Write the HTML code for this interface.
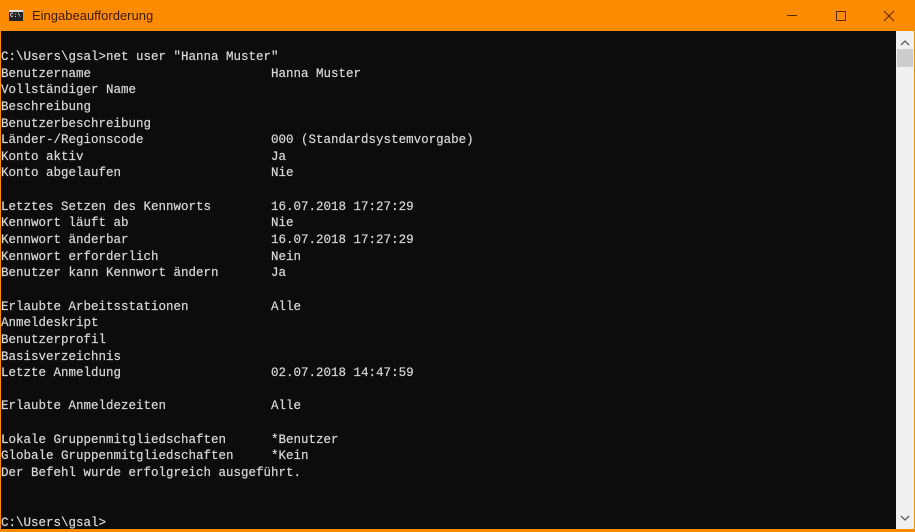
<!DOCTYPE html>
<html><head><meta charset="utf-8"><style>
html,body{margin:0;padding:0;width:915px;height:530px;overflow:hidden;background:#ff8c00;}
#title{position:absolute;left:0;top:0;width:915px;height:31px;background:#ff8c00;}
#title .t{position:absolute;left:32px;top:8px;font:13px "Liberation Sans",sans-serif;color:#3a1a00;}
#ico{position:absolute;left:9px;top:10px;width:14px;height:11px;background:#222;border-top:2px solid #ddd;box-sizing:border-box;}
#ico span{position:absolute;left:1px;top:0px;font:bold 6px "Liberation Mono",monospace;color:#ddd;}
#con{position:absolute;left:1px;top:31px;width:895px;height:498px;background:#0c0c0c;}
pre{position:absolute;left:1px;top:49px;margin:0;font:12.5px/16.64px "Liberation Mono",monospace;color:#d8d8d8;-webkit-text-stroke:0.2px #d8d8d8;}
#sb{position:absolute;left:896px;top:31px;width:18px;height:498px;background:#f0f0f0;}
#thumb{position:absolute;left:897px;top:49px;width:16px;height:18px;background:#cdcdcd;}
.ctl{position:absolute;top:0;height:31px;}
</style></head><body>
<div id="title">
<div id="ico"><span>C:\</span></div>
<div class="t">Eingabeaufforderung</div>
<svg class="ctl" style="left:780px" width="135" height="31">
<line x1="7" y1="15.5" x2="17" y2="15.5" stroke="#5a2a00" stroke-width="1"/>
<rect x="56.5" y="11.5" width="9" height="9" fill="none" stroke="#5a2a00" stroke-width="1"/>
<line x1="104" y1="11" x2="114" y2="21" stroke="#5a2a00" stroke-width="1"/>
<line x1="114" y1="11" x2="104" y2="21" stroke="#5a2a00" stroke-width="1"/>
</svg>
</div>
<div id="con"></div>
<div id="sb"></div>
<div id="thumb"></div>
<svg style="position:absolute;left:896px;top:31px" width="18" height="498">
<polyline points="5,14 9,10 13,14" fill="none" stroke="#606060" stroke-width="1.3"/>
<polyline points="5,485 9,489 13,485" fill="none" stroke="#606060" stroke-width="1.3"/>
</svg>
<pre>C:\Users\gsal&gt;net user "Hanna Muster"
Benutzername                        Hanna Muster
Vollständiger Name
Beschreibung
Benutzerbeschreibung
Länder-/Regionscode                 000 (Standardsystemvorgabe)
Konto aktiv                         Ja
Konto abgelaufen                    Nie

Letztes Setzen des Kennworts        16.07.2018 17:27:29
Kennwort läuft ab                   Nie
Kennwort änderbar                   16.07.2018 17:27:29
Kennwort erforderlich               Nein
Benutzer kann Kennwort ändern       Ja

Erlaubte Arbeitsstationen           Alle
Anmeldeskript
Benutzerprofil
Basisverzeichnis
Letzte Anmeldung                    02.07.2018 14:47:59

Erlaubte Anmeldezeiten              Alle

Lokale Gruppenmitgliedschaften      *Benutzer
Globale Gruppenmitgliedschaften     *Kein
Der Befehl wurde erfolgreich ausgeführt.


C:\Users\gsal&gt;</pre>
</body></html>
